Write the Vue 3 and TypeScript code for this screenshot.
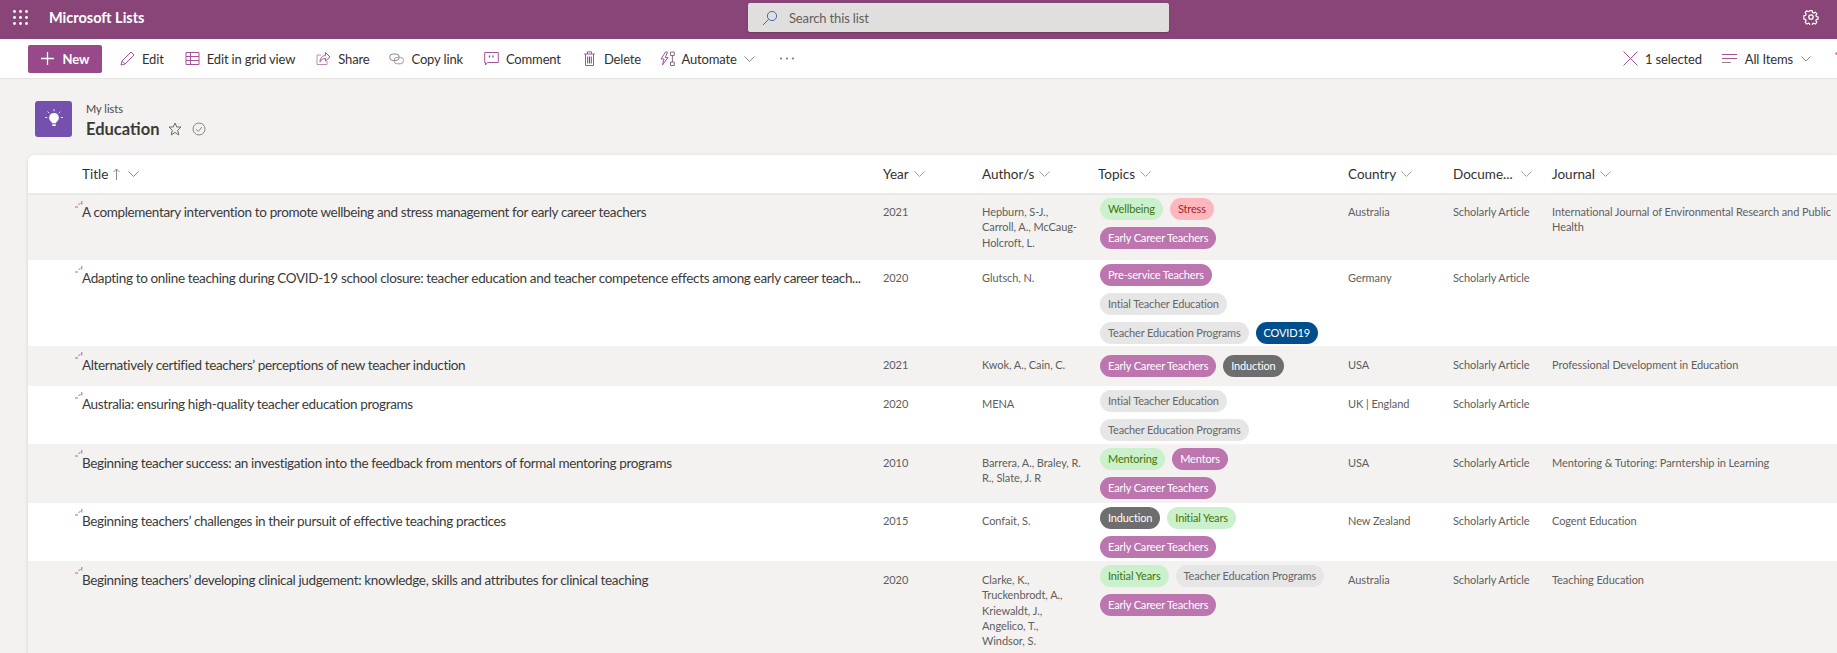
<script setup lang="ts">
type Chip = { t: string; c: string }
type Row = {
  h: number; pad: number; chipTop: number; gray: boolean; title: string; year: string
  authors: string; lines: Chip[][]; country: string; doc: string; journal: string
}
const ecT: Chip = { t: 'Early Career Teachers', c: 'purple' }
const ite: Chip = { t: 'Intial Teacher Education', c: 'grey' }
const tep: Chip = { t: 'Teacher Education Programs', c: 'grey' }
const ind: Chip = { t: 'Induction', c: 'dark' }
const iy: Chip = { t: 'Initial Years', c: 'green' }
const SA = 'Scholarly Article'
const rows: Row[] = [
  { h: 65, pad: 9, chipTop: 3, gray: true, title: 'A complementary intervention to promote wellbeing and stress management for early career teachers', year: '2021', authors: 'Hepburn, S-J.,\nCarroll, A., McCaug-\nHolcroft, L.', lines: [[{ t: 'Wellbeing', c: 'green' }, { t: 'Stress', c: 'red' }], [ecT]], country: 'Australia', doc: SA, journal: 'International Journal of Environmental Research and Public\nHealth' },
  { h: 86, pad: 10, chipTop: 4, gray: false, title: 'Adapting to online teaching during COVID-19 school closure: teacher education and teacher competence effects among early career teach...', year: '2020', authors: 'Glutsch, N.', lines: [[{ t: 'Pre-service Teachers', c: 'purple' }], [ite], [tep, { t: 'COVID19', c: 'blue' }]], country: 'Germany', doc: SA, journal: '' },
  { h: 40, pad: 11, chipTop: 9, gray: true, title: 'Alternatively certified teachers’ perceptions of new teacher induction', year: '2021', authors: 'Kwok, A., Cain, C.', lines: [[ecT, ind]], country: 'USA', doc: SA, journal: 'Professional Development in Education' },
  { h: 58, pad: 10, chipTop: 4, gray: false, title: 'Australia: ensuring high-quality teacher education programs', year: '2020', authors: 'MENA', lines: [[ite], [tep]], country: 'UK | England', doc: SA, journal: '' },
  { h: 59, pad: 11, chipTop: 4, gray: true, title: 'Beginning teacher success: an investigation into the feedback from mentors of formal mentoring programs', year: '2010', authors: 'Barrera, A., Braley, R.\nR., Slate, J. R', lines: [[{ t: 'Mentoring', c: 'green' }, { t: 'Mentors', c: 'purple' }], [ecT]], country: 'USA', doc: SA, journal: 'Mentoring & Tutoring: Parntership in Learning' },
  { h: 58, pad: 10, chipTop: 4, gray: false, title: 'Beginning teachers’ challenges in their pursuit of effective teaching practices', year: '2015', authors: 'Confait, S.', lines: [[ind, iy], [ecT]], country: 'New Zealand', doc: SA, journal: 'Cogent Education' },
  { h: 100, pad: 11, chipTop: 4, gray: true, title: 'Beginning teachers’ developing clinical judgement: knowledge, skills and attributes for clinical teaching', year: '2020', authors: 'Clarke, K.,\nTruckenbrodt, A.,\nKriewaldt, J.,\nAngelico, T.,\nWindsor, S.', lines: [[iy, tep], [ecT]], country: 'Australia', doc: SA, journal: 'Teaching Education' },
]
const cols = [
  { t: 'Year', gap: 5 },
  { t: 'Author/s', gap: 5 },
  { t: 'Topics', gap: 5 },
  { t: 'Country', gap: 5 },
  { t: 'Docume...', gap: 8 },
  { t: 'Journal', gap: 5 },
]
</script>

<template>
  <div class="page">
    <header class="suite">
      <div class="suite-left">
        <svg class="waffle" width="15" height="15" viewBox="0 0 15 15"><g fill="#fff"><circle v-for="p in [1.5,7.5,13.5].flatMap(y=>[1.5,7.5,13.5].map(x=>[x,y]))" :key="p.join()" :cx="p[0]" :cy="p[1]" r="1.4"/></g></svg>
        <span class="brand">Microsoft Lists</span>
      </div>
      <div class="search">
        <svg width="16" height="16" viewBox="0 0 16 16" fill="none" stroke="#3b6fb5" stroke-width="1"><circle cx="10" cy="6" r="4.6"/><path d="M6.6 9.4 1 15"/></svg>
        <span>Search this list</span>
      </div>
      <svg class="gear" width="16" height="16" viewBox="0 0 16 16" fill="none" stroke="#fff" stroke-width="1.3"><circle cx="8" cy="8" r="2.2"/><path d="M6.7 1h2.6l.4 2 1.3.6 1.8-1 1.7 1.9-1.1 1.7.5 1.3 2 .5v2.4l-2 .5-.5 1.3 1.1 1.7-1.7 1.9-1.8-1-1.3.6-.4 2H6.7l-.4-2-1.3-.6-1.8 1-1.7-1.9 1.1-1.7-.5-1.3-2-.5V6.5l2-.5.5-1.3-1.1-1.7 1.7-1.9 1.8 1 1.3-.6z" transform="translate(.8 .8) scale(.9)"/></svg>
    </header>

    <nav class="bar">
      <button class="new"><svg width="15" height="15" viewBox="0 0 15 15" stroke="#fff" stroke-width="1.3"><path d="M7.5 1v13M1 7.5h13"/></svg>New</button>
      <div class="act a-edit"><svg width="15" height="15" viewBox="0 0 15 15" fill="none" stroke="#a6549a"><path d="M1 14l1-4L11 1l3 3-9 9z"/><path d="M2 10l3 3" stroke="#8a8886"/></svg>Edit</div>
      <div class="act a-grid"><svg width="15" height="15" viewBox="0 0 15 15" fill="none" stroke="#a6549a"><path d="M1 1.5h13v12H1zM1 5.5h13M1 9.5h13M5.5 1.5v12"/></svg>Edit in grid view</div>
      <div class="act a-share"><svg width="15" height="15" viewBox="0 0 15 15" fill="none" stroke="#a6549a"><path d="M5 4H1v9.5h10V10" stroke="#b98cb0"/><path d="M9.500 1.500 14 6l-4.500 4V7.500C7 7.500 5 8.500 4 11c0-4 2.500-6.500 5.500-6.500z"/></svg>Share</div>
      <div class="act a-link"><svg width="15" height="12" viewBox="0 0 15 12" fill="none" stroke="#8a8886"><rect x=".7" y="1" width="9.500" height="6.500" rx="3.200"/><rect x="5" y="4.300" width="9.500" height="6.500" rx="3.200" stroke="#b98cb0"/></svg>Copy link</div>
      <div class="act a-comment"><svg width="15" height="15" viewBox="0 0 15 15" fill="none" stroke="#a6549a"><path d="M.7 1.500h13.600v10H3.500l-2 2.500v-2.500H.7z"/><path d="M5.500 4.500v2M9 4.500v2" stroke-width="1.300" stroke="#605e5c"/></svg>Comment</div>
      <div class="act a-del"><svg width="11" height="15" viewBox="0 0 11 15" fill="none" stroke="#a6549a"><path d="M1.500 3v11.500h8V3M.2 3h10.600M3.500 3V.8h4V3"/><path d="M3.700 5.500v7M5.500 5.500v7M7.300 5.500v7" stroke="#605e5c"/></svg>Delete</div>
      <div class="act a-auto"><svg width="15" height="15" viewBox="0 0 15 15" fill="none" stroke="#a6549a"><path d="M5.500 1 1 8h3l-1.500 6L8 6.500H5.300L7.500 1z"/><path d="M10.500 1h3.800v3.500h-3.800zM10.500 11h3.800v3.500h-3.800zM12.400 4.500V11" stroke="#8a6a85"/></svg>Automate<svg class="chev" width="11" height="6" viewBox="0 0 11 6" fill="none" stroke="#8a8886"><path d="m.5.5 5 5 5-5"/></svg></div>
      <svg class="dots" width="14" height="3" viewBox="0 0 14 3" fill="#605e5c"><circle cx="1" cy="1.500" r=".9"/><circle cx="7" cy="1.500" r=".9"/><circle cx="13" cy="1.500" r=".9"/></svg>
      <div class="bar-right">
        <svg class="x" width="15" height="15" viewBox="0 0 15 15" stroke="#a6549a"><path d="M.5.5l14 14M14.500.5l-14 14"/></svg>
        <span class="sel">1 selected</span>
        <svg class="ln" width="15" height="9" viewBox="0 0 15 9" stroke="#a6549a"><path d="M0 .5h15M0 4.500h15" /><path d="M0 8.500h9" stroke="#8a8886"/></svg>
        <span class="all">All Items</span>
        <svg class="chev2" width="10" height="6" viewBox="0 0 10 6" fill="none" stroke="#8a8886"><path d="m.5.5 4.500 4.500 4.500-4.500"/></svg>
        <svg class="fl" width="14" height="14" viewBox="0 0 14 14" fill="none" stroke="#a6549a"><path d="M.5 1h13L8.500 7v6l-3-2V7z"/></svg>
      </div>
    </nav>

    <section class="head">
      <div class="tile">
        <svg width="22" height="22" viewBox="0 0 22 22"><path fill="#fff" d="M11 5a4.800 4.800 0 0 0-2.800 8.700c.6.500.8 1 .8 1.600h4c0-.6.200-1.100.8-1.600A4.800 4.800 0 0 0 11 5zM9.300 16.200h3.400v1.800H9.300z"/><path stroke="#e3d6f0" stroke-width="1" d="M11 1v2.300M4.500 3.500 6.300 5.300M17.500 3.500 15.700 5.300M2 9.500h2.300M17.700 9.500H20"/></svg>
      </div>
      <div class="names">
        <div class="crumb">My lists</div>
        <div class="lname">
          <span>Education</span>
          <svg width="14" height="14" viewBox="0 0 14 14" fill="none" stroke="#605e5c" stroke-width=".9"><path d="m7 1 1.800 4H13L9.700 8.200 10.800 13 7 10.400 3.200 13l1.100-4.800L1 5h4.200z"/></svg>
          <svg width="14" height="14" viewBox="0 0 14 14" fill="none" stroke="#797775" stroke-width=".9"><circle cx="7" cy="7" r="6"/><path d="m4 7.200 2.200 2.200L10 5"/></svg>
        </div>
      </div>
    </section>

    <main class="card">
      <div class="thead grid">
        <div class="th title-h">Title
          <svg width="7" height="12" viewBox="0 0 7 12" fill="none" stroke="#8a8886"><path d="M3.500 12V1M.5 4l3-3 3 3"/></svg>
          <svg width="11" height="6" viewBox="0 0 11 6" fill="none" stroke="#8a8886"><path d="m.5.5 5 5 5-5"/></svg>
        </div>
        <div v-for="c in cols" :key="c.t" class="th" :style="{ gap: c.gap + 'px' }">
          <span>{{ c.t }}</span>
          <svg width="11" height="6" viewBox="0 0 11 6" fill="none" stroke="#a19f9d"><path d="m.5.5 5 5 5-5"/></svg>
        </div>
      </div>
      <div
        v-for="r in rows" :key="r.title"
        class="grid row" :class="{ gray: r.gray }"
        :style="{ height: r.h + 'px', '--pad': r.pad + 'px', '--chip': r.chipTop + 'px' }"
      >
        <div class="tt">
          <svg class="spark" width="8" height="8" viewBox="0 0 8 8" fill="none" stroke="#a6549a" stroke-width=".9"><path d="M0 6h3M3.500 4 5.500 2M6.800 0v3.500"/></svg>
          <span>{{ r.title }}</span>
        </div>
        <div class="sm">{{ r.year }}</div>
        <div class="sm">{{ r.authors }}</div>
        <div class="chips">
          <div v-for="(l, i) in r.lines" :key="i" class="line">
            <span v-for="c in l" :key="c.t" class="chip" :class="c.c">{{ c.t }}</span>
          </div>
        </div>
        <div class="sm">{{ r.country }}</div>
        <div class="sm">{{ r.doc }}</div>
        <div class="sm">{{ r.journal }}</div>
      </div>
    </main>
  </div>
</template>

<style>
html, body { margin: 0; overflow: hidden; }
</style>

<style scoped>
.page { width: 1837px; height: 100vh; overflow: hidden; background: #f3f2f1; font-family: "Lato", "Open Sans", sans-serif; color: #323130; }
.suite { height: 39px; background: #894578; position: relative; display: flex; align-items: center; }
.suite-left { display: flex; align-items: center; padding-left: 13px; position: relative; top: -2px; }
.brand { color: #fff; font-weight: 700; font-size: 14.5px; margin-left: 21px; }
.search { position: absolute; left: 748px; top: 3px; width: 421px; height: 29px; background: #e1dfdd; border-radius: 2px; display: flex; align-items: center; padding-left: 14px; box-sizing: border-box; gap: 11px; font-size: 13px; letter-spacing: -.15px; color: #605e5c; box-shadow: 0 1px 2px rgba(0,0,0,.2); }
.gear { position: absolute; left: 1803px; top: 9px; }
.bar { height: 40px; background: #fff; border-bottom: 1px solid #e6e4e2; box-sizing: border-box; display: flex; align-items: center; position: relative; padding-left: 28px; font-size: 13px; letter-spacing: -.15px; }
.new { width: 74px; height: 28px; border: 0; border-radius: 2px; background: #97498a; color: #fff; font: 700 13px "Lato", sans-serif; display: flex; align-items: center; justify-content: center; gap: 7px; padding: 0; }
.act { display: flex; align-items: center; gap: 7px; white-space: nowrap; }
.a-edit { margin-left: 18px; }
.a-grid { margin-left: 21px; }
.a-share { margin-left: 21px; }
.a-link { margin-left: 20px; }
.a-comment { margin-left: 21px; }
.a-del { margin-left: 23px; gap: 9px; }
.a-auto { margin-left: 18.5px; }
.dots { margin-left: 25px; }
.bar-right { position: absolute; left: 1623px; top: 0; height: 39px; display: flex; align-items: center; white-space: nowrap; }
.sel { margin-left: 7px; }
.ln { margin-left: 20px; }
.all { margin-left: 8px; }
.chev2 { margin-left: 8px; }
.fl { margin-left: 24px; }
.head { height: 76px; display: flex; box-sizing: border-box; padding: 22px 0 0 35px; }
.tile { width: 37px; height: 36px; background: #7351ad; border-radius: 3px; display: flex; align-items: center; justify-content: center; }
.names { margin-left: 14px; }
.crumb { font-size: 11px; line-height: 14px; margin-top: 1px; color: #484644; }
.lname { display: flex; align-items: center; font-size: 16.5px; font-weight: 700; line-height: 24px; color: #3b3a39; margin-top: 1px; }
.lname svg:first-of-type { margin-left: 9px; }
.lname svg:last-of-type { margin-left: 10px; }
.card { margin-left: 28px; background: #fff; border-radius: 6px 0 0 0; box-shadow: 0 1px 4px rgba(0,0,0,.12); }
.grid { display: grid; grid-template-columns: 855px 99px 116px 250px 105px 99px 300px; }
.thead { height: 38px; border-bottom: 2px solid #e9e8e6; box-sizing: content-box; }
.th { display: flex; align-items: center; font-size: 13.5px; color: #323130; }
.title-h { padding-left: 54px; gap: 5px; }
.title-h svg:last-child { margin-left: 3px; }
.row { box-sizing: border-box; overflow: hidden; background: #fff; }
.row.gray { background: #f3f2f1; }
.tt { position: relative; padding: var(--pad) 0 0 54px; font-size: 13.5px; letter-spacing: -.35px; line-height: 16px; white-space: nowrap; color: #3b3a39; }
.spark { position: absolute; left: 47px; top: 6px; }
.sm { padding-top: var(--pad); font-size: 11px; letter-spacing: -.07px; line-height: 15.25px; color: #605e5c; white-space: pre; }
.chips { padding-top: var(--chip); padding-left: 2px; }
.line { display: flex; gap: 7px; margin-bottom: 7px; }
.chip { height: 22px; border-radius: 11px; padding: 0 8px; font-size: 11px; letter-spacing: -.15px; line-height: 21px; white-space: nowrap; box-sizing: border-box; }
.purple { background: #bd75b0; color: #fff; }
.grey { background: #e6e6e6; color: #666; }
.green { background: #caf0cc; color: #437406; }
.red { background: #ffb6bc; color: #a4262c; }
.dark { background: #6e6e6e; color: #fff; }
.blue { background: #004e8c; color: #fff; }
</style>
